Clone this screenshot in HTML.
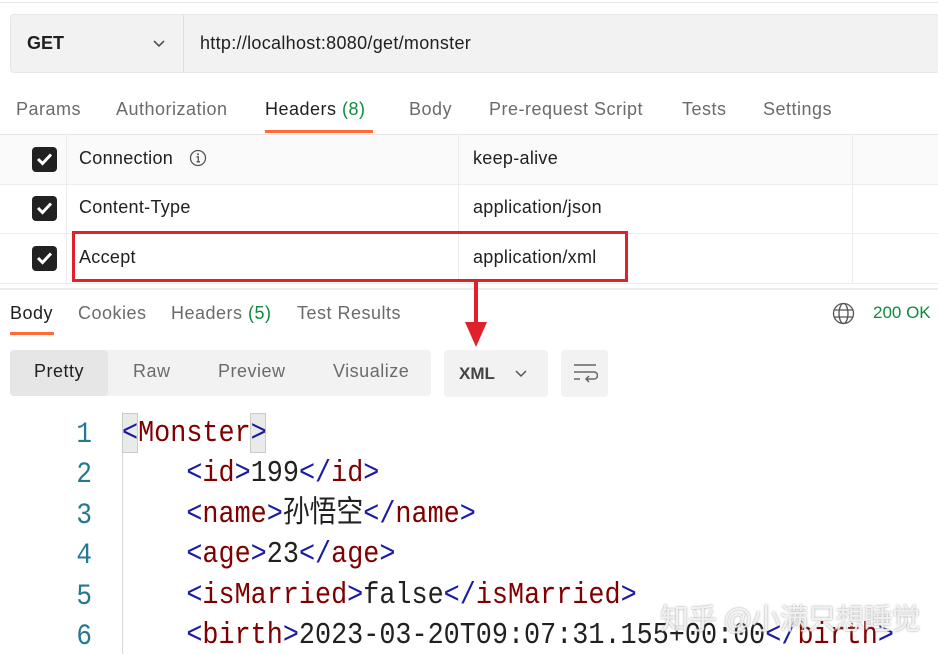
<!DOCTYPE html>
<html><head><meta charset="utf-8"><style>
body{margin:0;width:938px;height:654px;overflow:hidden;background:#fff;font-family:"Liberation Sans","Noto Sans CJK SC",sans-serif;position:relative;color:#212121}
.a{position:absolute}
.tab{position:absolute;font-size:18px;color:#6b6b6b;top:99px;letter-spacing:0.5px}
.cb{position:absolute;left:32px;width:25px;height:25px;background:#212121;border-radius:4px}
.cb svg{position:absolute;left:4px;top:5px}
.cell{position:absolute;font-size:18px;color:#212121;letter-spacing:0.3px}
.code{position:absolute;font-family:"Liberation Mono","Noto Sans CJK SC",monospace;font-size:26.8px;line-height:32px;height:32px;left:0;white-space:pre;transform:scaleY(1.15);transform-origin:left center}
.t{color:#1a1aa6}.n{color:#800000}
.ln{position:absolute;left:60px;width:32px;text-align:right;font-family:"Liberation Mono",monospace;font-size:26px;line-height:32px;color:#237893;transform:scaleY(1.15)}
</style></head><body>
<div class="a" style="left:0;top:2px;width:938px;height:1px;background:#e6e6e6"></div>
<div class="a" style="left:10px;top:14px;width:930px;height:59px;background:#f2f2f2;border:1px solid #e6e6e6;border-radius:4px;box-sizing:border-box"></div>
<div class="a" style="left:183px;top:15px;width:1px;height:57px;background:#e0e0e0"></div>
<div class="a" style="left:27px;top:33px;font-size:18px;font-weight:bold">GET</div>
<svg class="a" style="left:152px;top:39px" width="14" height="10"><path d="M2 2l5 5 5-5" fill="none" stroke="#555" stroke-width="1.6"/></svg>
<div class="a" style="left:200px;top:33px;font-size:18px;letter-spacing:0.3px">http://localhost:8080/get/monster</div>
<div class="tab" style="left:16px">Params</div>
<div class="tab" style="left:116px">Authorization</div>
<div class="tab" style="left:265px;color:#212121">Headers <span style="color:#0f8a3c">(8)</span></div>
<div class="tab" style="left:409px">Body</div>
<div class="tab" style="left:489px">Pre-request Script</div>
<div class="tab" style="left:682px">Tests</div>
<div class="tab" style="left:763px">Settings</div>
<div class="a" style="left:265px;top:130px;width:108px;height:3px;background:#ff6c37"></div>
<div class="a" style="left:0;top:134px;width:938px;height:50px;background:#fafafa"></div>
<div class="a" style="left:0;top:134px;width:938px;height:1px;background:#e6e6e6"></div>
<div class="a" style="left:0;top:184px;width:938px;height:1px;background:#ececec"></div>
<div class="a" style="left:0;top:233px;width:938px;height:1px;background:#ececec"></div>
<div class="a" style="left:0;top:283px;width:938px;height:1px;background:#ececec"></div>
<div class="a" style="left:0;top:288px;width:938px;height:2px;background:#ececec"></div>
<div class="a" style="left:66px;top:134px;width:1px;height:150px;background:#ececec"></div>
<div class="a" style="left:458px;top:134px;width:1px;height:150px;background:#ececec"></div>
<div class="a" style="left:852px;top:134px;width:1px;height:150px;background:#ececec"></div>
<div class="cb" style="top:147px"><svg width="17" height="14"><path d="M2 7l4.5 4.5L15 2.5" fill="none" stroke="#fff" stroke-width="3"/></svg></div>
<div class="cb" style="top:196px"><svg width="17" height="14"><path d="M2 7l4.5 4.5L15 2.5" fill="none" stroke="#fff" stroke-width="3"/></svg></div>
<div class="cb" style="top:246px"><svg width="17" height="14"><path d="M2 7l4.5 4.5L15 2.5" fill="none" stroke="#fff" stroke-width="3"/></svg></div>
<div class="cell" style="left:79px;top:148px">Connection</div>
<svg class="a" style="left:189px;top:149px" width="18" height="18"><circle cx="9" cy="9" r="7.5" fill="none" stroke="#555" stroke-width="1.3"/><circle cx="9" cy="5.3" r="1" fill="#555"/><path d="M7.5 7.8h1.8v5M7.5 12.8h3.5" stroke="#555" stroke-width="1.3" fill="none"/></svg>
<div class="cell" style="left:473px;top:148px">keep-alive</div>
<div class="cell" style="left:79px;top:197px">Content-Type</div>
<div class="cell" style="left:473px;top:197px">application/json</div>
<div class="cell" style="left:79px;top:247px">Accept</div>
<div class="cell" style="left:473px;top:247px">application/xml</div>
<div class="a" style="left:72px;top:231px;width:556px;height:51px;border:3px solid #e0202a;box-sizing:border-box"></div>
<div class="a" style="left:474px;top:281px;width:4px;height:46px;background:#e0202a"></div>
<svg class="a" style="left:465px;top:322px" width="22" height="26"><path d="M0 0h22L11 25z" fill="#e0202a"/></svg>
<div class="tab" style="left:10px;top:303px;color:#212121">Body</div>
<div class="a" style="left:10px;top:332px;width:44px;height:3px;background:#ff6c37"></div>
<div class="tab" style="left:78px;top:303px">Cookies</div>
<div class="tab" style="left:171px;top:303px">Headers <span style="color:#0f8a3c">(5)</span></div>
<div class="tab" style="left:297px;top:303px">Test Results</div>
<svg class="a" style="left:832px;top:302px" width="23" height="23"><g fill="none" stroke="#555" stroke-width="1.3"><circle cx="11.5" cy="11.5" r="10"/><ellipse cx="11.5" cy="11.5" rx="4.5" ry="10"/><path d="M2 8h19M2 15h19"/></g></svg>
<div class="tab" style="left:873px;top:303px;color:#0f8a3c;font-size:17px;letter-spacing:0">200 OK</div>
<div class="a" style="left:10px;top:350px;width:421px;height:46px;background:#f2f2f2;border-radius:4px"></div>
<div class="a" style="left:10px;top:350px;width:98px;height:46px;background:#e6e6e6;border-radius:4px"></div>
<div class="tab" style="left:34px;top:361px;color:#212121">Pretty</div>
<div class="tab" style="left:133px;top:361px">Raw</div>
<div class="tab" style="left:218px;top:361px">Preview</div>
<div class="tab" style="left:333px;top:361px">Visualize</div>
<div class="a" style="left:444px;top:350px;width:104px;height:47px;background:#f2f2f2;border-radius:4px"></div>
<div class="a" style="left:459px;top:364px;font-size:17px;font-weight:bold;color:#444">XML</div>
<svg class="a" style="left:514px;top:369px" width="14" height="10"><path d="M2 2l5 5 5-5" fill="none" stroke="#555" stroke-width="1.5"/></svg>
<div class="a" style="left:561px;top:350px;width:47px;height:47px;background:#f2f2f2;border-radius:4px"></div>
<svg class="a" style="left:572px;top:362px" width="26" height="24"><g fill="none" stroke="#666" stroke-width="1.5"><path d="M2 3h22M2 10h20a3.5 3.5 0 0 1 0 7h-8M2 17h6M17 14l-3 3 3 3"/></g></svg>
<div class="a" style="left:122px;top:412px;width:1px;height:242px;background:#d8d8d8"></div>
<div class="a" style="left:122px;top:413px;width:16px;height:40px;background:#e8ebe8;border:1px solid #c8cdc8;box-sizing:border-box"></div>
<div class="a" style="left:250px;top:413px;width:16px;height:40px;background:#e8ebe8;border:1px solid #c8cdc8;box-sizing:border-box"></div>
<div class="ln" style="top:418px">1</div>
<div class="ln" style="top:458px">2</div>
<div class="ln" style="top:499px">3</div>
<div class="ln" style="top:539px">4</div>
<div class="ln" style="top:580px">5</div>
<div class="ln" style="top:620px">6</div>
<div class="a" style="left:122px;top:0;width:816px">
<div class="code" style="top:418px"><span class="t">&lt;</span><span class="n">Monster</span><span class="t">&gt;</span></div>
<div class="code" style="top:458px">    <span class="t">&lt;</span><span class="n">id</span><span class="t">&gt;</span>199<span class="t">&lt;/</span><span class="n">id</span><span class="t">&gt;</span></div>
<div class="code" style="top:499px">    <span class="t">&lt;</span><span class="n">name</span><span class="t">&gt;</span>孙悟空<span class="t">&lt;/</span><span class="n">name</span><span class="t">&gt;</span></div>
<div class="code" style="top:539px">    <span class="t">&lt;</span><span class="n">age</span><span class="t">&gt;</span>23<span class="t">&lt;/</span><span class="n">age</span><span class="t">&gt;</span></div>
<div class="code" style="top:580px">    <span class="t">&lt;</span><span class="n">isMarried</span><span class="t">&gt;</span>false<span class="t">&lt;/</span><span class="n">isMarried</span><span class="t">&gt;</span></div>
<div class="code" style="top:620px">    <span class="t">&lt;</span><span class="n">birth</span><span class="t">&gt;</span>2023-03-20T09:07:31.155+00:00<span class="t">&lt;/</span><span class="n">birth</span><span class="t">&gt;</span></div>
</div>
<div class="a" style="left:660px;top:596px;font-size:29px;color:rgba(255,255,255,0.8);text-shadow:0 0 2px #999;letter-spacing:-1px">知乎 @小满只想睡觉</div>
</body></html>
